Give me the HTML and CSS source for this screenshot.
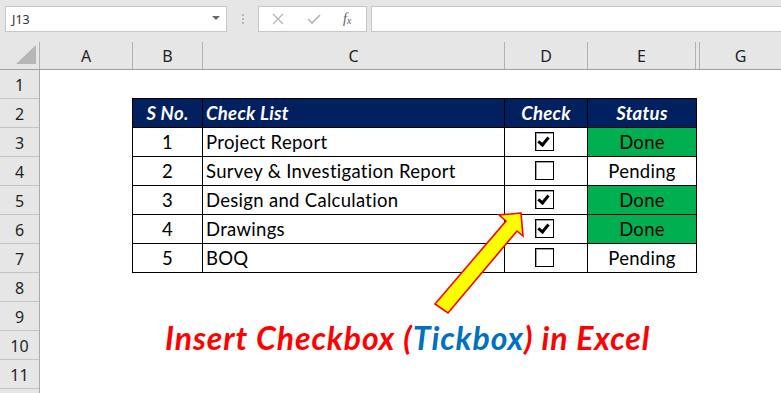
FILE: index.html
```html
<!DOCTYPE html>
<html>
<head>
<meta charset="utf-8">
<link rel="stylesheet" href="styles.css">
</head>
<body>
<div class="app">
  <div class="topbar">
    <div class="namebox"><span class="ref">J13</span><span class="dd"></span></div>
    <div class="dots"><i></i><i></i><i></i></div>
    <div class="fxbox">
      <svg class="ico" viewBox="0 0 12 12" width="12" height="12"><path d="M1 1 L11 11 M11 1 L1 11" stroke="#b4b4b4" stroke-width="1.3" fill="none"/></svg>
      <svg class="ico" viewBox="0 0 14 12" width="14" height="12"><path d="M1 6 L5 10 L13 2" stroke="#b4b4b4" stroke-width="1.6" fill="none"/></svg>
      <span class="fx">f<sub>x</sub></span>
    </div>
    <div class="formula"></div>
  </div>

  <div class="colheads">
    <div class="corner"><svg viewBox="0 0 40 27" width="40" height="27"><polygon points="16,22 36,3 36,22" fill="#b6b6b6"/></svg></div>
    <div class="ch">A</div>
    <div class="ch">B</div>
    <div class="ch">C</div>
    <div class="ch">D</div>
    <div class="ch">E</div>
    <div class="ch"></div>
    <div class="ch last">G</div>
  </div>

  <div class="sheet">
    <div class="rowheads">
      <div class="rh">1</div><div class="rh">2</div><div class="rh">3</div><div class="rh">4</div>
      <div class="rh">5</div><div class="rh">6</div><div class="rh">7</div><div class="rh">8</div>
      <div class="rh">9</div><div class="rh">10</div><div class="rh">11</div><div class="rh"></div>
    </div>
    <div class="cells">
      <div class="tbl">
        <div class="c hd center">S No.</div>
        <div class="c hd left">Check List</div>
        <div class="c hd center">Check</div>
        <div class="c hd center">Status</div>

        <div class="c center">1</div>
        <div class="c left">Project Report</div>
        <div class="c center"><span class="cb on"></span></div>
        <div class="c center done">Done</div>

        <div class="c center">2</div>
        <div class="c left">Survey &amp; Investigation Report</div>
        <div class="c center"><span class="cb"></span></div>
        <div class="c center">Pending</div>

        <div class="c center">3</div>
        <div class="c left">Design and Calculation</div>
        <div class="c center"><span class="cb on"></span></div>
        <div class="c center done">Done</div>

        <div class="c center">4</div>
        <div class="c left">Drawings</div>
        <div class="c center"><span class="cb on"></span></div>
        <div class="c center done">Done</div>

        <div class="c center">5</div>
        <div class="c left">BOQ</div>
        <div class="c center"><span class="cb"></span></div>
        <div class="c center">Pending</div>
      </div>
      <div class="title">Insert Checkbox (<span class="blue">Tickbox</span>) in Excel</div>
    </div>
  </div>

  <svg class="arrow" viewBox="0 0 781 393" width="781" height="393">
    <polygon points="521,213 499,215 506,221 435,304 448,313 517,231 523,236" fill="#ffff00" stroke="#ff0000" stroke-width="1.6" stroke-linejoin="miter"/>
  </svg>
</div>
</body>
</html>
```

FILE: styles.css
```css
* { box-sizing: border-box; }
html, body { margin: 0; padding: 0; }
body { width: 781px; height: 393px; overflow: hidden; background: #fff; font-family: "Noto Sans", "Open Sans", sans-serif; }

.app { position: relative; width: 781px; height: 393px; overflow: hidden; background: #e6e6e6; }

/* formula bar */
.topbar { height: 42px; display: flex; align-items: flex-start; padding: 6px 0 0 5px; }
.namebox { width: 222px; height: 26px; background: #fff; border: 1px solid #c6c6c6; display: flex; align-items: center; justify-content: space-between; padding: 0 6px 0 6px; }
.ref { font-size: 12.5px; color: #333; }
.dd { width: 0; height: 0; border-left: 4px solid transparent; border-right: 4px solid transparent; border-top: 4px solid #6a6a6a; margin-top: -2px; }
.dots { width: 31px; height: 26px; display: flex; flex-direction: column; align-items: center; justify-content: center; gap: 2px; }
.dots i { display: block; width: 2px; height: 2px; background: #b8b8b8; }
.fxbox { width: 109px; height: 26px; background: #fff; border: 1px solid #c6c6c6; display: flex; align-items: center; padding-left: 13px; gap: 0; }
.fxbox .ico:nth-child(1) { margin-right: 23px; }
.fxbox .ico:nth-child(2) { margin-right: 22px; }
.fx { font-family: "Liberation Serif", serif; font-style: italic; font-size: 14px; color: #606060; }
.fx sub { font-size: 10px; vertical-align: -1px; }
.formula { flex: 1; height: 26px; margin-left: 4px; background: #fff; border: 1px solid #c6c6c6; border-right: none; }

/* column headers */
.colheads { height: 28px; display: grid; grid-template-columns: 40px 93px 70px 302px 83px 108px 4px 1fr; border-bottom: 1px solid #9f9f9f; }
.corner { border-right: 1px solid #b2b2b2; }
.corner svg { display: block; }
.ch { border-right: 1px solid #b2b2b2; display: flex; align-items: center; justify-content: center; font-size: 16px; color: #1f1f1f; padding-top: 1px; }
.ch.last { border-right: none; }

/* sheet */
.sheet { display: flex; height: 323px; }
.rowheads { width: 40px; border-right: 1px solid #ababab; flex: none; }
.rh { height: 29px; border-bottom: 1px solid #c4c4c4; display: flex; align-items: center; justify-content: center; font-size: 16px; color: #1f1f1f; padding-top: 1px; }
.cells { flex: 1; background: #fff; padding: 28px 0 0 92px; }

.tbl { display: grid; grid-template-columns: 70px 302px 83px 109px; width: 565px; border-left: 1px solid #000; border-top: 1px solid #000; font-family: "Lato", "Open Sans", sans-serif; font-size: 18.5px; letter-spacing: 0.3px; color: #000; }
.c { height: 29px; border-right: 1px solid #000; border-bottom: 1px solid #000; display: flex; align-items: center; white-space: nowrap; }
.center { justify-content: center; }
.left { padding-left: 3px; }
.hd { background: #002060; color: #fff; font-weight: 700; font-style: italic; }
.done { background: #00b050; }

.cb { display: block; width: 19px; height: 19px; border: 1px solid #000; background: #fff; box-shadow: inset 1px 1px 0 #a0a0a0; position: relative; margin-top: -1px; margin-left: -3px; }
.cb.on::after { content: ""; position: absolute; left: 4px; top: 2px; width: 4px; height: 8px; border-right: 3px solid #000; border-bottom: 3px solid #000; transform: rotate(40deg); }

.title { margin: 47px 0 0 33px; font-family: "Lato", "Open Sans", sans-serif; font-weight: 700; font-style: italic; font-size: 32px; letter-spacing: 0.9px; line-height: 36px; color: #ff0000; white-space: nowrap; }
.blue { color: #0070c0; }

.arrow { position: absolute; left: 0; top: 0; pointer-events: none; }
```
